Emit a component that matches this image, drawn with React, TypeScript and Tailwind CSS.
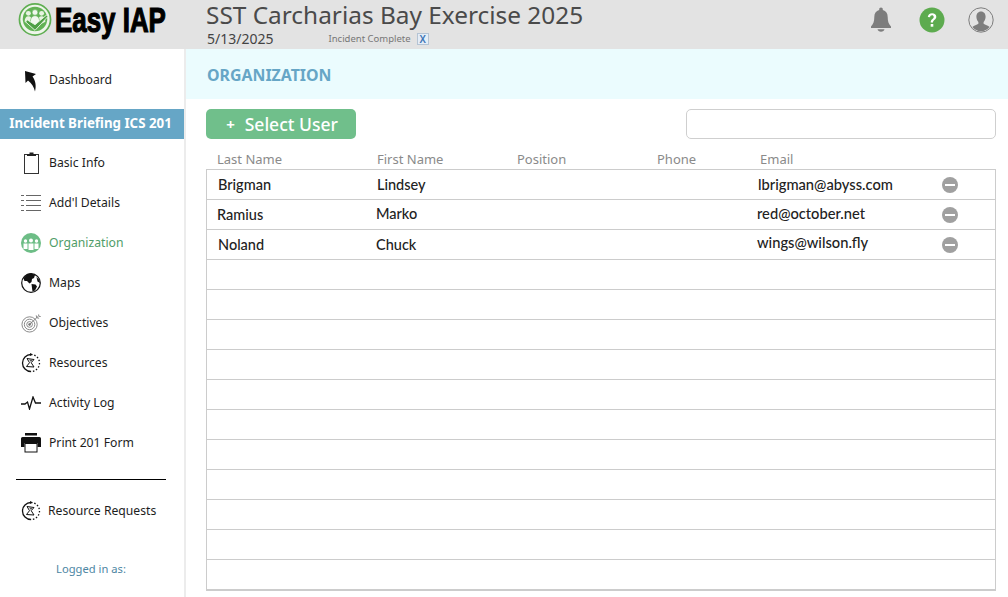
import type { ReactNode } from "react";

const uiFont = "font-['Noto_Sans','Open_Sans',sans-serif]";

// --- Icons ---
const Logo = () => (
  <svg width="34" height="33" viewBox="0 0 36 35">
    <circle cx="18" cy="17.500" r="16.500" fill="#eef5ea" stroke="#5fae52" strokeWidth="1.800" />
    <circle cx="18" cy="17" r="13" fill="#62b255" />
    <g fill="#e8f3e2">
      <circle cx="11" cy="11" r="2.600" />
      <circle cx="25" cy="11" r="2.600" />
      <path d="M7 20c0-4 1.500-6 4-6s4 2 4 6l-3 2z" />
      <path d="M21 20c0-4 1.500-6 4-6s4 2 4 6l-4 2z" />
    </g>
    <circle cx="18" cy="10" r="3" fill="#f2f8ee" stroke="#62b255" strokeWidth="0.600" />
    <path d="M13 21c0-5 2-7.500 5-7.500s5 2.500 5 7.500l-5 3.500z" fill="#f2f8ee" stroke="#62b255" strokeWidth="0.600" />
    <path d="M8 20l10 9 14-15-2-1-12 10-8-5z" fill="#4f9f45" stroke="#e8f3e2" strokeWidth="1" />
  </svg>
);

const Bell = () => (
  <svg width="22" height="26" viewBox="0 0 22 26" fill="#7d7d7d">
    <path d="M11 .5c1.100 0 1.800.7 1.800 1.900v.7c3.300.9 4.900 3.600 4.900 7 0 4.500.9 7 3.300 9.500v1.400H1v-1.400c2.400-2.500 3.300-5 3.300-9.500 0-3.400 1.600-6.100 4.900-7v-.7C9.200 1.200 9.900.5 11 .5z" />
    <path d="M7.500 22.300h7c-.3 1.500-1.700 2.500-3.500 2.500s-3.200-1-3.500-2.500z" />
  </svg>
);

const Help = () => (
  <svg width="26" height="26" viewBox="0 0 26 26">
    <circle cx="13" cy="13" r="12.500" fill="#5dab4f" />
    <path d="M8.800 10c.2-2.500 1.900-3.800 4.300-3.800 2.500 0 4.200 1.400 4.200 3.500 0 3-3.300 3-3.300 5.800h-2.300c-.1-3.500 3-3.700 3-5.600 0-1-.7-1.600-1.700-1.600-1.100 0-1.800.7-1.900 1.900z" fill="#fff" />
    <rect x="11.700" y="17" width="2.600" height="2.700" fill="#fff" />
  </svg>
);

const Profile = () => (
  <svg width="26" height="26" viewBox="0 0 26 26">
    <circle cx="13" cy="13" r="12.200" fill="none" stroke="#7d7d7d" strokeWidth="1" />
    <path d="M13 4.500c3 0 4.600 2.300 4.600 5.200 0 2.200-.9 4.200-2 5.300v1.700c1.500 1 4.500 1.700 6 3.200-2 2.500-5 4.300-8.600 4.300s-6.600-1.800-8.600-4.300c1.500-1.500 4.500-2.200 6-3.200V15c-1.100-1.100-2-3.100-2-5.300 0-2.900 1.600-5.200 4.600-5.200z" fill="#7d7d7d" />
  </svg>
);

const BackArrow = () => (
  <svg width="20" height="22" viewBox="0 0 20 22" fill="#111">
    <path d="M4 1l11 3-3.500 2.500c3 4 4 9 2.500 15-1-4.500-3.500-8.500-7-11L4.500 13z" />
  </svg>
);

const Clipboard = () => (
  <svg width="20" height="22" viewBox="0 0 20 22" fill="none">
    <rect x="3.500" y="2.500" width="14" height="19" stroke="#333" />
    <path d="M6 4h9V2h-2.500V.5h-4V2H6z" fill="#222" />
  </svg>
);

const ListIcon = () => (
  <svg width="20" height="18" viewBox="0 0 20 18" stroke="#666" strokeWidth="1">
    <path d="M0 1.500h3M5 1.500h15M0 6.500h3M5 6.500h15M0 11.500h3M5 11.500h15M0 16.500h3M5 16.500h15" />
  </svg>
);

const GroupCircle = () => (
  <svg width="20" height="20" viewBox="0 0 20 20">
    <circle cx="10" cy="10" r="10" fill="#6dbd86" />
    <g fill="#fff">
      <circle cx="4.500" cy="8" r="1.700" />
      <circle cx="15.500" cy="8" r="1.700" />
      <circle cx="10" cy="7.500" r="2" />
      <path d="M2.500 10.500h4V16h-4zM13.500 10.500h4V16h-4zM7.500 10.500h5V17h-5z" />
    </g>
  </svg>
);

const Globe = () => (
  <svg width="20" height="20" viewBox="0 0 20 20">
    <circle cx="10" cy="10" r="9.300" fill="#fff" stroke="#111" strokeWidth="1.200" />
    <path d="M7 1c3-1 5 0 7 1l-1 3-2 1-.5 3-2 1.500L6 8 3.500 8 2.500 5.500C3.500 3.500 5 2 7 1z" fill="#111" />
    <path d="M10.500 11l4 .5 1.500 2-2 4-2.500 1-.5-3.500zM15.500 4l3 3 .5 3-2.500-1.500z" fill="#111" />
  </svg>
);

const Target = () => (
  <svg width="21" height="20" viewBox="0 0 21 20" fill="none" stroke="#777" strokeWidth="0.900">
    <circle cx="9" cy="11.500" r="8" />
    <circle cx="9" cy="11.500" r="5.500" />
    <circle cx="9" cy="11.500" r="3" />
    <circle cx="9" cy="11.500" r="1" fill="#777" />
    <path d="M9 11.500L18 3M16 2l.5 2.500L19 5M18.500 1l.2 2 2 .2" />
  </svg>
);

const Hourglass = () => (
  <svg width="20" height="20" viewBox="0 0 20 20" fill="none" stroke="#111">
    <path d="M10 1.500A8.500 8.500 0 1 0 10 18.500" strokeWidth="1.300" />
    <path d="M10 1.500A8.500 8.500 0 0 1 10 18.500" strokeWidth="1.300" strokeDasharray="1.500 1.800" />
    <path d="M9 0l2.500 1.500L9 3z" fill="#111" stroke="none" />
    <path d="M6 5.500l7 1-2.800 3.200 2.800 4.300-7.500-.5 3-3.800z" strokeWidth="1" />
    <path d="M8 6.500l3.500.5-1.500 2z" fill="#555" stroke="none" />
  </svg>
);

const Pulse = () => (
  <svg width="20" height="14" viewBox="0 0 20 14" fill="none" stroke="#111" strokeWidth="1.300">
    <path d="M0 8h4l2.500-2 2 7L12 1l2.500 6H20" />
  </svg>
);

const Printer = () => (
  <svg width="20" height="20" viewBox="0 0 20 20">
    <rect x="4" y="0" width="12" height="2.500" fill="#111" />
    <path d="M1.500 4h17A1.500 1.500 0 0 1 20 5.500V14h-3.500v-4h-13v4H0V5.500A1.500 1.500 0 0 1 1.500 4z" fill="#111" />
    <rect x="4" y="10.500" width="12" height="8.500" fill="#fff" stroke="#111" />
  </svg>
);

// --- Sidebar ---
const NavItem = ({ icon, label, active }: { icon: ReactNode; label: string; active?: boolean }) => (
  <div className="flex h-10 items-center pl-[21px]">
    <span className="flex w-5 justify-center">{icon}</span>
    <span className={`ml-2 text-[12.200px] ${active ? "text-[#4f9d68]" : "text-[#1d1d1d]"}`}>{label}</span>
  </div>
);

const items: { icon: ReactNode; label: string; active?: boolean }[] = [
  { icon: <Clipboard />, label: "Basic Info" },
  { icon: <ListIcon />, label: "Add'l Details" },
  { icon: <GroupCircle />, label: "Organization", active: true },
  { icon: <Globe />, label: "Maps" },
  { icon: <Target />, label: "Objectives" },
  { icon: <Hourglass />, label: "Resources" },
  { icon: <Pulse />, label: "Activity Log" },
  { icon: <Printer />, label: "Print 201 Form" },
];

const users = [
  { last: "Brigman", first: "Lindsey", email: "lbrigman@abyss.com", lastCls: "", firstCls: "", emailCls: "" },
  { last: "Ramius", first: "Marko", email: "red@october.net", lastCls: "-ml-px", firstCls: "-ml-px -mt-0.5", emailCls: "-ml-px -mt-0.5" },
  { last: "Noland", first: "Chuck", email: "wings@wilson.fly", lastCls: "", firstCls: "-ml-px", emailCls: "-ml-px -mt-1" },
];

const emptyRows = Array.from({ length: 11 }, (_, i) => i);

const RemoveIcon = () => (
  <span className="flex h-4 w-4 items-center justify-center rounded-full bg-[#a0a0a0]">
    <span className="h-[2px] w-[10px] bg-white" />
  </span>
);

export default function App() {
  return (
    <div className={`flex h-[597px] w-[1008px] flex-col overflow-hidden bg-white ${uiFont}`}>
      <header className="flex h-[49px] shrink-0 bg-[#e3e3e3]">
        <div className="flex w-[206px] items-start pl-[18px] pt-[3px]">
          <Logo />
          <span className="ml-[3px] -mt-[2px] origin-left scale-x-[0.74] font-['Liberation_Sans',sans-serif] text-[35px] leading-[38px] font-bold whitespace-nowrap text-black [-webkit-text-stroke:1.2px_black]">
            Easy&nbsp;IAP
          </span>
        </div>
        <div className="flex-1">
          <div className="text-[24.400px] leading-[30px] text-[#4a4a4a]">SST Carcharias Bay Exercise 2025</div>
          <div className="flex items-center">
            <span className="pl-px text-[14px] leading-[18px] text-[#444]">5/13/2025</span>
            <span className="ml-[55px] text-[9.500px] leading-[18px] text-[#777]">Incident Complete</span>
            <span className="ml-[6px] flex h-3 w-3 items-center justify-center border border-[#b5c4d4] bg-[#e4edf7] text-[10px] leading-none font-semibold text-[#3d74b5]">X</span>
          </div>
        </div>
        <div className="flex items-start pr-[14px] pt-[7px]">
          <Bell />
          <span className="ml-[27px]"><Help /></span>
          <span className="ml-[23px]"><Profile /></span>
        </div>
      </header>

      <div className="flex min-h-0 flex-1">
        <aside className="w-[186px] shrink-0 border-r-2 border-[#ececec]">
          <div className="flex h-[60px] items-center pl-[21px] pt-[3px]">
            <span className="flex w-5 justify-center"><BackArrow /></span>
            <span className="ml-2 text-[12.200px] text-[#1d1d1d]">Dashboard</span>
          </div>
          <div className="flex h-[30px] items-center justify-center bg-[#66a6c6] pr-[3px] text-[13.300px] font-bold text-white">
            Incident Briefing ICS 201
          </div>
          <nav className="mt-[4px]">
            {items.map((item) => (
              <NavItem key={item.label} {...item} />
            ))}
          </nav>
          <div className="mx-4 mt-[16px] w-[150px] border-t border-black" />
          <div className="mt-[11px] flex h-10 items-center pl-[21px]">
            <Hourglass />
            <span className="ml-[7px] text-[12.200px] text-[#1d1d1d]">Resource Requests</span>
          </div>
          <div className="mt-[30px] pr-[2px] text-center text-[11.200px] text-[#4d86a3]">Logged in as:</div>
        </aside>

        <main className="min-w-0 flex-1">
          <div className="flex h-[50px] items-center bg-[#ebfcfe] pl-[21px] pt-[3px] text-[15.900px] font-bold text-[#66a6c6]">ORGANIZATION</div>
          <div className="mx-[20px] mt-[10px] w-[790px]">
            <div className="flex justify-between">
              <button className="flex h-[30px] w-[150px] items-center justify-center rounded-[5px] bg-[#70bf8b] pl-[2px] text-[17.500px] font-medium text-white">
                <span className="mr-[10px] text-[15px] font-bold">+</span>Select User
              </button>
              <input className="h-[30px] w-[310px] rounded-[5px] border border-[#cfcfcf] bg-white" />
            </div>
            <div className="mt-[10px] grid h-[20px] grid-cols-[160px_140px_140px_103px_1fr] pl-[11px] text-[13px] leading-[20px] text-[#8a8a8a]">
              <span>Last Name</span>
              <span>First Name</span>
              <span>Position</span>
              <span>Phone</span>
              <span>Email</span>
            </div>
            <div className="border-x border-b-2 border-[#cccccc] font-['Lato',sans-serif] text-[14.500px] font-medium text-[#222]">
              {users.map((u) => (
                <div key={u.email} className="grid h-[30px] grid-cols-[159px_141px_140px_100px_184px_1fr] items-center border-t border-[#cccccc] pl-[11px]">
                  <span className={u.lastCls}>{u.last}</span>
                  <span className={u.firstCls}>{u.first}</span>
                  <span />
                  <span />
                  <span className={`text-[14.700px] ${u.emailCls}`}>{u.email}</span>
                  <RemoveIcon />
                </div>
              ))}
              {emptyRows.map((i) => (
                <div key={i} className="h-[30px] border-t border-[#cccccc]" />
              ))}
            </div>
          </div>
        </main>
      </div>
    </div>
  );
}
